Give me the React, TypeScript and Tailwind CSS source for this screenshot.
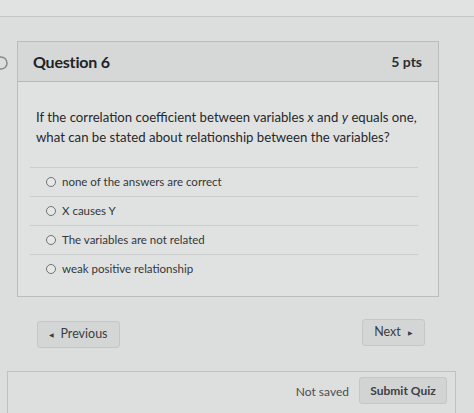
const answers = [
  "none of the answers are correct",
  "X causes Y",
  "The variables are not related",
  "weak positive relationship",
];

function Radio() {
  return <span className="mr-[6px] inline-block h-[10px] w-[10px] shrink-0 rounded-full border border-[#6f7472] bg-[#e6e8e7]" />;
}

export default function App() {
  return (
    <div
      className="h-[413px] w-[474px] overflow-hidden bg-[#dcdedd] text-[#2a2d31]"
      style={{ fontFamily: "Lato, 'Open Sans', sans-serif" }}
    >
      <div className="h-[17px] border-b border-[#c3c6c5] bg-[#e1e3e2]" />

      <div className="mt-[24px] flex items-start">
        <svg width="9" height="16" viewBox="0 0 9 16" className="mt-[14px] shrink-0">
          <circle cx="1" cy="8" r="6" fill="none" stroke="#8a8e8c" strokeWidth="1.6" />
        </svg>
        <div className="ml-[8px] w-[422px] border border-[#babdbc] bg-[#e0e2e1]">
          <div className="flex h-[40px] items-center justify-between border-b border-[#b5b8b7] bg-[#d6d8d7] pl-[15px] pr-[16px]">
            <span className="text-[16px] font-bold tracking-[-0.2px] text-[#202327]">Question 6</span>
            <span className="text-[14px] font-bold text-[#2a2d31]">5 pts</span>
          </div>
          <div className="px-[12px] pb-[13px] pt-[25px]">
            <p className="whitespace-nowrap pl-[6px] text-[13.2px] leading-[20px] text-[#25282c]">
              If the correlation coefficient between variables <i>x</i> and <i>y</i> equals one,
              <br />
              what can be stated about relationship between the variables?
            </p>
            <div className="mt-[20px] mr-[8px]">
              {answers.map((a) => (
                <div
                  key={a}
                  className="flex h-[29px] items-center border-t border-[#cbcecd] pl-[16px] text-[11.5px] text-[#33363a]"
                >
                  <Radio />
                  <span>{a}</span>
                </div>
              ))}
            </div>
          </div>
        </div>
      </div>

      <div className="mt-[22px] flex items-start justify-between pl-[37px] pr-[49px]">
        <button className="mt-[2px] flex h-[27px] w-[83px] items-center justify-center gap-[6px] rounded-[3px] border border-[#c4c7c6] bg-[#d4d6d5] text-[12.5px] text-[#3a3d41]">
          <span className="text-[6px]">◀</span>
          <span>Previous</span>
        </button>
        <button className="flex h-[27px] w-[63px] items-center justify-center gap-[7px] rounded-[3px] border border-[#c4c7c6] bg-[#d4d6d5] text-[12.5px] text-[#3a3d41]">
          <span>Next</span>
          <span className="text-[6px]">▶</span>
        </button>
      </div>

      <div className="mt-[23px] ml-[7px] flex h-[50px] w-[449px] items-start justify-end border border-[#bfc2c1] bg-[#dddfde] pr-[8px] pt-[5px]">
        <span className="mr-[10px] mt-[6px] text-[12px] text-[#4a4d51]">Not saved</span>
        <button className="flex h-[27px] w-[88px] items-center justify-center rounded-[3px] border border-[#c4c7c6] bg-[#d2d4d3] text-[12px] font-bold text-[#3d4044]">
          Submit Quiz
        </button>
      </div>
    </div>
  );
}
